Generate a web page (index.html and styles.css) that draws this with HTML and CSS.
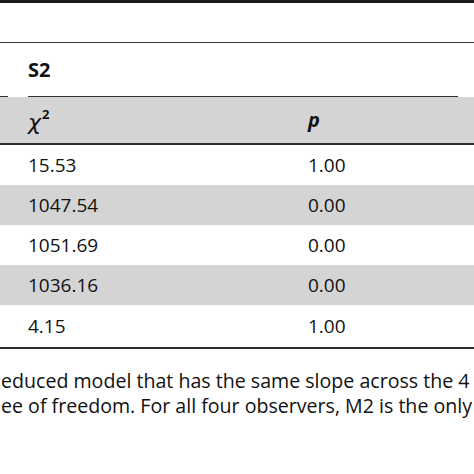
FILE: index.html
```html
<!DOCTYPE html>
<html>
<head>
<meta charset="utf-8">
<link rel="stylesheet" href="styles.css">
</head>
<body>
<div class="page">
  <div class="topbar"></div>
  <div class="spacer"></div>
  <div class="group-row">
    <span class="group-label">S2</span>
  </div>
  <div class="group-rule">
    <div class="rule-stub"></div>
    <div class="rule-main"></div>
  </div>
  <div class="row head">
    <div class="cell c1"><span class="chi">χ</span><sup class="sq">2</sup></div>
    <div class="cell c2"><span class="pv">p</span></div>
  </div>
  <div class="row">
    <div class="cell c1">15.53</div>
    <div class="cell c2">1.00</div>
  </div>
  <div class="row shade">
    <div class="cell c1">1047.54</div>
    <div class="cell c2">0.00</div>
  </div>
  <div class="row">
    <div class="cell c1">1051.69</div>
    <div class="cell c2">0.00</div>
  </div>
  <div class="row shade">
    <div class="cell c1">1036.16</div>
    <div class="cell c2">0.00</div>
  </div>
  <div class="row last">
    <div class="cell c1">4.15</div>
    <div class="cell c2">1.00</div>
  </div>
  <div class="caption">
    <p class="cap-line">educed model that has the same slope across the 4</p>
    <p class="cap-line">ee of freedom. For all four observers, M2 is the only</p>
  </div>
</div>
</body>
</html>
```

FILE: styles.css
```css
html, body {
  margin: 0;
  padding: 0;
  background: #ffffff;
}
.page {
  width: 474px;
  height: 474px;
  overflow: hidden;
  font-family: "Open Sans", "Liberation Sans", sans-serif;
  color: #111111;
  font-weight: 500;
}
.topbar {
  height: 3px;
  background: #1b1b1b;
}
.spacer {
  height: 39px;
  border-bottom: 1px solid #3a3a3a;
}
.group-row {
  height: 53px;
  display: flex;
  align-items: center;
  padding-left: 28px;
}
.group-label {
  font-weight: 700;
  font-size: 20px;
  line-height: 1;
  padding-top: 1px;
}
.group-rule {
  display: flex;
  height: 1px;
}
.rule-stub {
  width: 8px;
  background: #333;
}
.rule-main {
  margin-left: 20px;
  width: 430px;
  background: #333;
}
.row {
  display: flex;
  align-items: center;
  height: 40px;
  font-size: 19px;
}
.row.head {
  height: 46px;
  background: #d4d4d4;
  border-bottom: 2px solid #2e2e2e;
}
.row.shade {
  background: #d4d4d4;
}
.row.last {
  height: 42px;
  border-bottom: 2px solid #2e2e2e;
}
.cell {
  line-height: 1;
}
.c1 {
  width: 308px;
  padding-left: 28px;
  box-sizing: border-box;
}
.c2 {
  padding-left: 0;
}
.chi {
  font-family: "DejaVu Sans", "Liberation Sans", sans-serif;
  font-style: italic;
  font-size: 22px;
  position: relative;
  top: 2px;
}
.sq {
  font-weight: 700;
  font-size: 13px;
  vertical-align: 9px;
  margin-left: 1px;
}
.pv {
  font-weight: 700;
  font-style: italic;
  font-size: 20px;
}
.caption {
  padding-top: 19px;
}
.cap-line {
  margin: 0;
  white-space: nowrap;
  font-size: 19.6px;
  line-height: 25px;
  padding-left: 1px;
}
```
